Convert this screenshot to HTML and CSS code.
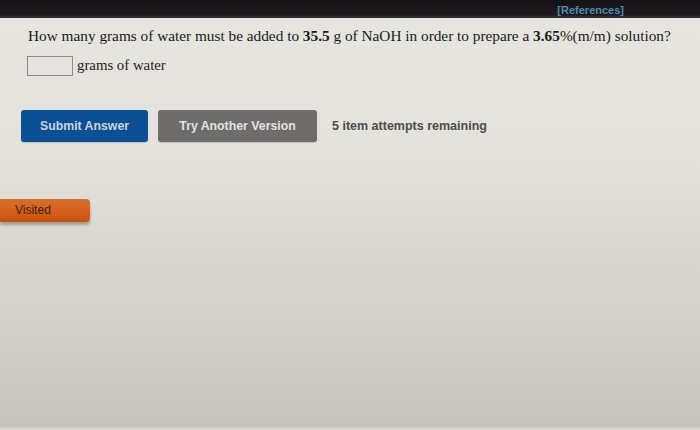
FILE: index.html
```html
<!DOCTYPE html>
<html>
<head>
<meta charset="utf-8">
<link rel="stylesheet" href="styles.css">
</head>
<body>
<div class="topbar"><span class="refs">[References]</span></div>
<div class="content">
  <p class="question">How many grams of water must be added to <b>35.5</b> g of NaOH in order to prepare a <b>3.65</b>%(m/m) solution?</p>
  <div class="answer-row">
    <span class="input-box"></span>
    <span class="unit">grams of water</span>
  </div>
  <div class="actions">
    <button class="btn btn-submit">Submit Answer</button>
    <button class="btn btn-try">Try Another Version</button>
    <span class="attempts">5 item attempts remaining</span>
  </div>
</div>
<div class="visited">Visited</div>
</body>
</html>
```
FILE: styles.css
```css
html, body {
  margin: 0;
  padding: 0;
  height: 100%;
}
body {
  width: 700px;
  height: 430px;
  overflow: hidden;
  background: linear-gradient(180deg, #e6e5e0 0%, #e3e2dc 35%, #d7d4cd 65%, #c7c3bb 99%, #dcdad5 100%);
  font-family: "Liberation Serif", serif;
  color: #1e1e1e;
}
.topbar {
  height: 18px;
  background: linear-gradient(180deg, #141214 0%, #1d1b1d 80%, #333132 100%);
  display: flex;
  justify-content: flex-end;
  align-items: center;
  padding-right: 76px;
}
.refs {
  font-family: "Liberation Sans", sans-serif;
  font-weight: bold;
  font-size: 11px;
  color: #4f8db0;
  margin-top: 1px;
}
.content {
  padding-left: 28px;
}
.question {
  margin: 0;
  padding-top: 9px;
  font-size: 15.3px;
  line-height: 18px;
  color: #1a1a1a;
}
.answer-row {
  display: flex;
  align-items: center;
  margin-top: 11px;
  margin-left: -1px;
}
.input-box {
  width: 44px;
  height: 18px;
  border: 1px solid #8d8c88;
  background: #e5e4df;
  box-sizing: content-box;
}
.unit {
  margin-left: 4px;
  font-size: 14.8px;
  color: #222;
  margin-top: -2px;
}
.actions {
  display: flex;
  align-items: center;
  margin-top: 34px;
  margin-left: -7px;
}
.btn {
  height: 32px;
  border: none;
  border-radius: 3px;
  font-family: "Liberation Sans", sans-serif;
  font-weight: bold;
  font-size: 12.3px;
  padding: 0;
}
.btn-submit {
  width: 127px;
  background: #0b4f95;
  color: #c9d5e3;
  box-shadow: 0 1px 1px rgba(0,0,0,0.15);
}
.btn-try {
  width: 159px;
  margin-left: 10px;
  background: #6f6d6b;
  color: #e2e2e2;
  box-shadow: 0 1px 1px rgba(0,0,0,0.15);
}
.attempts {
  margin-left: 15px;
  font-family: "Liberation Sans", sans-serif;
  font-weight: bold;
  font-size: 12.5px;
  color: #4e4d4b;
}
.visited {
  margin-top: 57px;
  width: 75px;
  height: 23px;
  padding-left: 15px;
  background: linear-gradient(180deg, #d5702e 0%, #d8611a 50%, #c2520f 100%);
  border-radius: 0 4px 4px 0;
  box-shadow: 0 3px 3px rgba(60,40,20,0.35);
  font-family: "Liberation Sans", sans-serif;
  font-size: 12px;
  line-height: 22px;
  color: #3a2518;
}
```
